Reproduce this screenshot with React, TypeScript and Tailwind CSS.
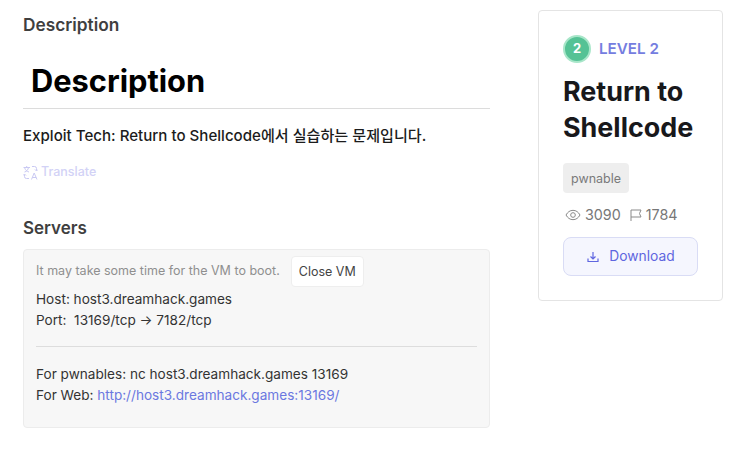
import React from 'react';

const sans = { fontFamily: 'Inter, "Noto Sans CJK KR", sans-serif' };

const EyeIcon = () => (
  <svg width="16" height="16" viewBox="0 0 24 24" fill="none" stroke="#8b8b8b" strokeWidth="1.5">
    <path d="M1.5 12C4 7.500 7.500 5 12 5s8 2.500 10.500 7c-2.500 4.500-6 7-10.500 7s-8-2.500-10.500-7z" />
    <circle cx="12" cy="12" r="3.500" />
  </svg>
);

const FlagIcon = () => (
  <svg width="12" height="14" viewBox="0 0 12 14" fill="none" stroke="#8b8b8b" strokeWidth="1">
    <path d="M1 13V2h10l-1.500 3.500L11 9H1" />
  </svg>
);

const DownloadIcon = () => (
  <svg width="14" height="14" viewBox="0 0 14 14" fill="none" stroke="#5f66e0" strokeWidth="1.200">
    <path d="M7 2v6.500M4.500 6.500 7 9l2.500-2.500M2 8.500v3h10v-3" />
  </svg>
);

const TranslateIcon = () => (
  <svg width="15" height="15" viewBox="0 0 15 15" fill="none" stroke="#c9c9f3" strokeWidth="1">
    <path d="M.5 2.500h6.500M3.700 1v1.500M1.500 7c2.200-.5 3.500-2.200 4-4.500M1.700 3c.6 2 2.300 3.500 4.300 4" />
    <path d="M8.500 14.500l2.700-6.500 2.800 6.500M9.300 12.500h3.800" />
    <path d="M9 1.500h2.500A2 2 0 0 1 13.500 3.500v2M12 4.500l1.500 1.500L15 4.500M6 13.500H3.500A2 2 0 0 1 1.500 11.500V9.500M0 10.500 1.500 9 3 10.500" />
  </svg>
);

export default function App() {
  return (
    <div className="flex w-[749px] h-[449px] bg-white overflow-hidden" style={sans}>
      <div className="w-[467px] ml-[23px] shrink-0">
        <h2 className="mt-[14px] text-[17.300px] leading-[22px] font-semibold text-[#3f3f3f]">Description</h2>
        <h1 className="mt-[23px] pl-2 pb-[5px] text-[30.800px] leading-[44px] font-bold text-black border-b border-[#dcdcdc]">
          Description
        </h1>
        <p className="mt-[15px] text-[15.100px] leading-[24px] font-medium text-[#1c1c1c]">
          Exploit Tech: Return to Shellcode에서 실습하는 문제입니다.
        </p>
        <div className="mt-[15px] flex items-center gap-[3px] text-[12.500px] leading-[18px] font-medium text-[#d2d2f6]">
          <TranslateIcon />
          <span>Translate</span>
        </div>
        <h3 className="mt-[35px] text-[17px] leading-[24px] font-semibold text-[#3f3f3f]">Servers</h3>
        <div className="mt-[9px] h-[179px] rounded-[4px] border border-[#ececec] bg-[#f7f7f7] px-3 pt-[6px] text-[13.600px] leading-[21px] text-[#333333]">
          <div className="flex items-center gap-[11px]">
            <span className="text-[12.500px] text-[#8f8f8f] -mt-[3px]">It may take some time for the VM to boot.</span>
            <button className="h-[31px] w-[73px] rounded-[4px] border border-[#eeeeee] bg-white text-[12.500px] text-[#444444]">
              Close VM
            </button>
          </div>
          <p className="mt-[2px]">Host: host3.dreamhack.games</p>
          <p>Port:&nbsp; 13169/tcp → 7182/tcp</p>
          <hr className="mt-[15px] mb-[17px] border-[#dddddd]" />
          <p>For pwnables: nc host3.dreamhack.games 13169</p>
          <p>
            For Web: <a className="text-[#6b78e0]">http://host3.dreamhack.games:13169/</a>
          </p>
        </div>
      </div>
      <div className="ml-[48px] mt-[10px] h-[291px] w-[185px] shrink-0 rounded-[4px] border border-[#e4e4e4] px-6 pt-6">
        <div className="flex items-center gap-2">
          <div className="flex h-7 w-7 items-center justify-center rounded-full border-2 border-[#a8e6c9] bg-[#55c295] text-[13px] font-bold text-white">
            2
          </div>
          <span className="text-[15.200px] font-semibold text-[#757de0]">LEVEL 2</span>
        </div>
        <h2 className="mt-[10px] text-[26.900px] leading-[36px] font-bold text-[#18181b]">Return to Shellcode</h2>
        <span className="mt-[18px] inline-block rounded-[4px] bg-[#eeeeee] px-2 pt-[8px] pb-[6px] text-[12.500px] leading-[16px] text-[#7a7a7a]">
          pwnable
        </span>
        <div className="mt-[12px] flex items-center text-[14.300px] leading-[20px] text-[#777777]">
          <span className="ml-[2px]"><EyeIcon /></span>
          <span className="ml-[4px]">3090</span>
          <span className="ml-[9px]"><FlagIcon /></span>
          <span className="ml-[4px]">1784</span>
        </div>
        <button className="mt-[12px] flex h-[39px] w-[135px] items-center justify-center gap-[9px] rounded-[8px] border border-[#d9dcf5] bg-[#f5f6fe] text-[13.800px] text-[#5f66e0]">
          <DownloadIcon />
          Download
        </button>
      </div>
    </div>
  );
}
